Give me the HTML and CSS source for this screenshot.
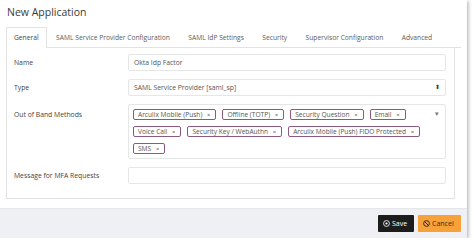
FILE: index.html
```html
<!DOCTYPE html>
<html>
<head>
<meta charset="utf-8">
<link rel="stylesheet" href="styles.css">
</head>
<body>
<div class="modal">
  <div class="header">New Application</div>
  <div class="body">
    <div class="tabs">
      <div class="tab active">General</div>
      <div class="tab">SAML Service Provider Configuration</div>
      <div class="tab">SAML IdP Settings</div>
      <div class="tab">Security</div>
      <div class="tab">Supervisor Configuration</div>
      <div class="tab">Advanced</div>
    </div>
    <div class="panel">
      <div class="row">
        <div class="label">Name</div>
        <div class="input">Okta Idp Factor</div>
      </div>
      <div class="row">
        <div class="label">Type</div>
        <div class="input select">SAML Service Provider [saml_sp]<span class="updown">&#x2B0D;</span></div>
      </div>
      <div class="row top">
        <div class="label lpad">Out of Band Methods</div>
        <div class="multi">
          <div class="tags">
            <span class="tag">Arculix Mobile (Push) <i>×</i></span>
            <span class="tag">Offline (TOTP) <i>×</i></span>
            <span class="tag">Security Question <i>×</i></span>
            <span class="tag">Email <i>×</i></span>
            <span class="tag">Voice Call <i>×</i></span>
            <span class="tag">Security Key / WebAuthn <i>×</i></span>
            <span class="tag">Arculix Mobile (Push) FIDO Protected <i>×</i></span>
            <span class="tag">SMS <i>×</i></span>
          </div>
          <span class="caret">▾</span>
        </div>
      </div>
      <div class="row">
        <div class="label">Message for MFA Requests</div>
        <div class="input"></div>
      </div>
    </div>
  </div>
  <div class="footer">
    <button class="btn save"><svg width="7" height="7" viewBox="0 0 10 10"><circle cx="5" cy="5" r="4.2" fill="none" stroke="#fff" stroke-width="1.2"/><circle cx="5" cy="5" r="1.6" fill="#fff"/></svg>Save</button>
    <button class="btn cancel"><svg width="7" height="7" viewBox="0 0 10 10"><circle cx="5" cy="5" r="4.1" fill="none" stroke="#2a2a2a" stroke-width="1.4"/><line x1="2.2" y1="2.2" x2="7.8" y2="7.8" stroke="#2a2a2a" stroke-width="1.4"/></svg>Cancel</button>
  </div>
</div>
</body>
</html>
```
FILE: styles.css
```css
* { box-sizing: border-box; }
body {
  margin: 0;
  background: #fff;
  font-family: "Open Sans", "Noto Sans", sans-serif;
  color: #444;
}
.modal {
  width: 467px;
  height: 238px;
  background: #fff;
  box-shadow: 1px 1px 4px rgba(0,0,0,0.35);
  display: flex;
  flex-direction: column;
}
.header {
  font-size: 10.5px;
  color: #3a3a3a;
  padding: 4px 7px 0;
  height: 27px;
  line-height: 17px;
}
.body {
  padding: 0 6px;
  height: 172px;
}
.tabs {
  display: flex;
  height: 21px;
  border-bottom: 1px solid #e2e2e2;
}
.tab {
  font-size: 6.7px;
  color: #5c5c5c;
  padding: 0 8.9px;
  line-height: 21px;
  margin-right: 0.6px;
  white-space: nowrap;
}
.tab.active {
  border: 1px solid #e2e2e2;
  border-bottom: 1px solid #fff;
  margin-bottom: -1px;
  line-height: 20px;
  color: #444;
  padding: 0 7px;
}
.panel {
  border: 1px solid #e2e2e2;
  border-top: none;
  height: 151px;
  margin-right: 6px;
  padding: 6px 8px 0 7px;
  display: flex;
  flex-direction: column;
  gap: 8px;
}
.row {
  display: flex;
  align-items: center;
}
.row.top { align-items: flex-start; }
.label {
  width: 114px;
  font-size: 6.8px;
  color: #444;
  flex: none;
}
.lpad { padding-top: 6px; }
.input {
  flex: 1;
  height: 17px;
  border: 1px solid #e6e6e6;
  border-radius: 2px;
  font-size: 6.8px;
  color: #555;
  line-height: 15px;
  padding: 0 5px;
  position: relative;
}
.updown {
  position: absolute;
  right: 5px;
  top: 0;
  font-size: 6px;
  color: #333;
}
.multi {
  flex: 1;
  height: 55px;
  border: 1px solid #e6e6e6;
  border-radius: 2px;
  padding: 4px 18px 0 4px;
  position: relative;
}
.tags {
  display: flex;
  flex-wrap: wrap;
  gap: 6px 6px;
}
.tag {
  font-size: 6.6px;
  color: #555;
  border: 1px solid #8c5a80;
  border-radius: 2px;
  height: 11px;
  line-height: 9px;
  padding: 0 5px 0 4px;
  white-space: nowrap;
}
.tag i {
  font-style: normal;
  font-size: 6px;
  margin-left: 3px;
  color: #444;
}
.caret {
  position: absolute;
  right: 6px;
  top: 4px;
  font-size: 7px;
  color: #777;
}
.footer {
  margin-top: 9px;
  flex: 1;
  background: #eef0f3;
  border-top: 1px solid #e4e6e9;
  display: flex;
  justify-content: flex-end;
  align-items: center;
  gap: 4px;
  padding: 0 6px 0 0;
}
.btn {
  border: none;
  height: 17px;
  border-radius: 1px;
  font-family: "Open Sans", sans-serif;
  font-size: 7px;
  display: flex;
  align-items: center;
  gap: 2px;
  padding: 0 4px;
}
.save { background: #1c1c1c; color: #fff; width: 36px; padding-left: 5px; }
.cancel { background: #f6a13a; color: #3a2a1a; width: 43px; padding-left: 5px; }
```
